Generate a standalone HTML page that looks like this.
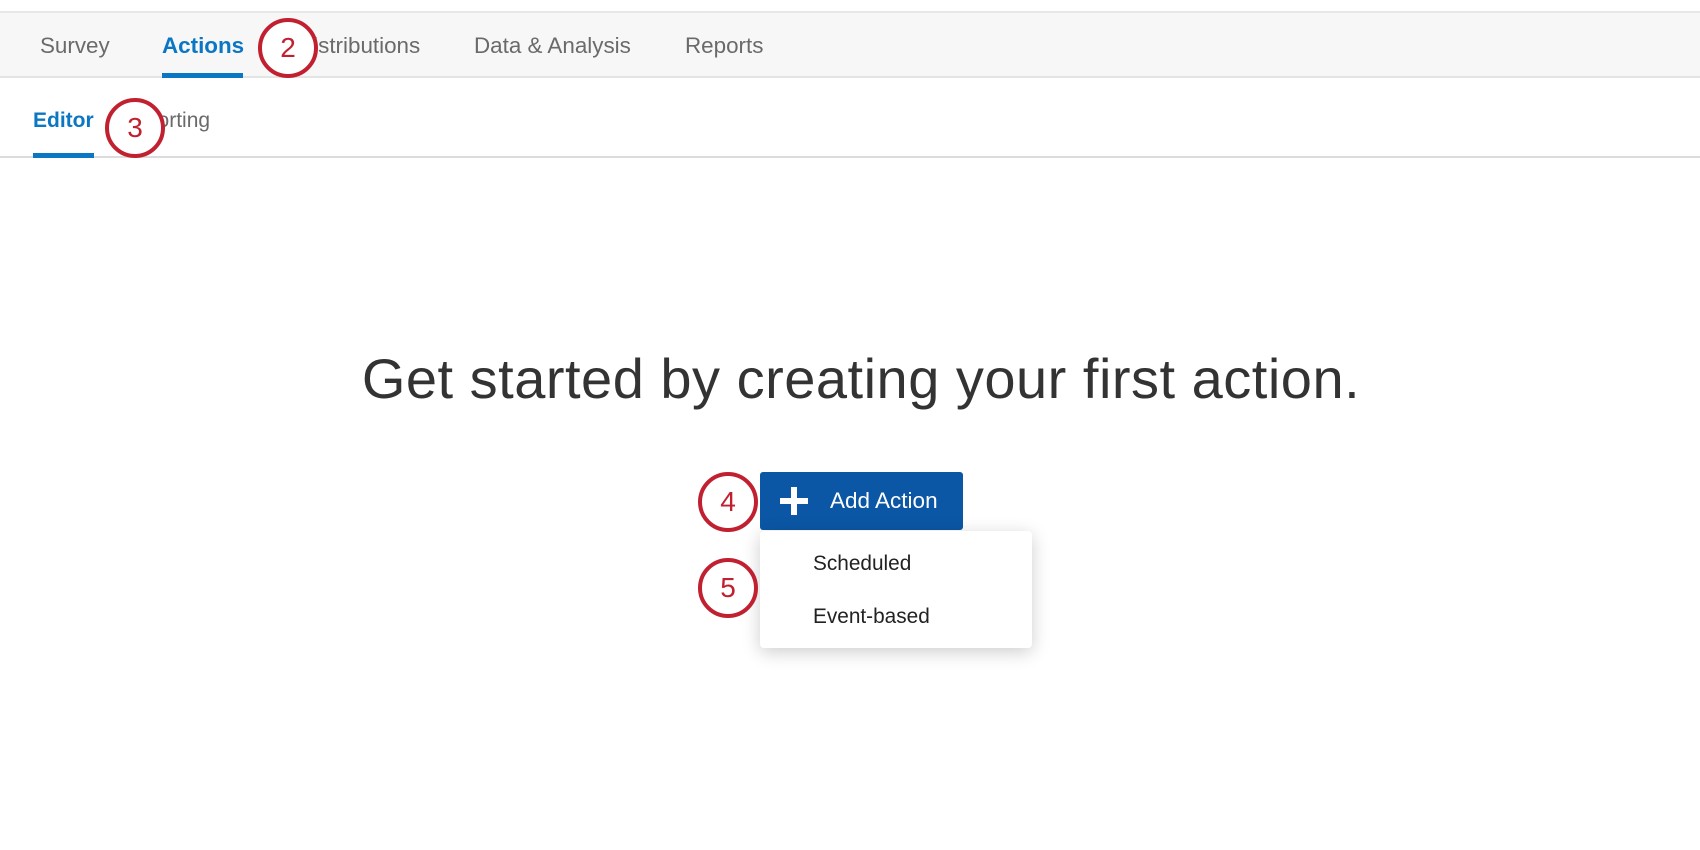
<!DOCTYPE html>
<html><head><meta charset="utf-8"><style>
*{margin:0;padding:0;box-sizing:border-box}
body{width:1700px;height:850px;background:#fff;font-family:"Liberation Sans",sans-serif;position:relative;overflow:hidden}
.top{position:absolute;left:0;top:11px;width:1700px;height:67px;background:#f7f7f7;border-top:2px solid #e8e8e8;border-bottom:2px solid #e4e4e4}
.t{position:absolute;font-size:22.4px;color:#6a6a6a;top:34px}
.sub{position:absolute;left:0;top:156px;width:1700px;height:2px;background:#dcdcdc}
.ul{position:absolute;height:5px;background:#0b77c4}
.c{position:absolute;width:60px;height:60px;border:4.5px solid #c0202f;border-radius:50%;background:#fff;color:#c0202f;font-size:28px;text-align:center;line-height:51px}
h1{position:absolute;left:11px;width:1700px;top:346px;text-align:center;font-weight:normal;font-size:56px;color:#333;letter-spacing:0.5px}
.btn{position:absolute;left:760px;top:472px;width:203px;height:58px;background:#0b57a5;border-radius:3px;color:#fff;font-size:22.5px}
.menu{position:absolute;left:760px;top:531px;width:272px;height:117px;background:#fff;border-radius:4px;box-shadow:0 4px 18px rgba(0,0,0,.2)}
.mi{position:absolute;left:53px;font-size:20.8px;color:#222}
</style></head><body>
<div class="top">
<div class="t" style="left:40px;top:20px">Survey</div>
<div class="t" style="left:162px;top:20px;color:#0b77c4;font-weight:bold">Actions</div>
<div class="t" style="left:297px;top:20px">Distributions</div>
<div class="t" style="left:474px;top:20px">Data &amp; Analysis</div>
<div class="t" style="left:685px;top:20px">Reports</div>
</div>
<div class="ul" style="left:162px;top:73px;width:81px"></div>
<div class="t" style="left:33px;top:109px;color:#0b77c4;font-weight:bold;font-size:21px">Editor</div>
<div class="t" style="left:119px;top:109px;font-size:21px">Reporting</div>
<div class="sub"></div>
<div class="ul" style="left:33px;top:153px;width:61px"></div>
<div class="c" style="left:258px;top:18px">2</div>
<div class="c" style="left:105px;top:98px">3</div>
<h1>Get started by creating your first action.</h1>
<div class="btn">
<div style="position:absolute;left:20px;top:26px;width:28px;height:6px;background:#fff"></div>
<div style="position:absolute;left:31px;top:15px;width:6px;height:28px;background:#fff"></div>
<div style="position:absolute;left:70px;top:16px">Add Action</div>
</div>
<div class="menu">
<div class="mi" style="top:21px">Scheduled</div>
<div class="mi" style="top:74px">Event-based</div>
</div>
<div class="c" style="left:698px;top:472px">4</div>
<div class="c" style="left:698px;top:558px">5</div>
</body></html>
